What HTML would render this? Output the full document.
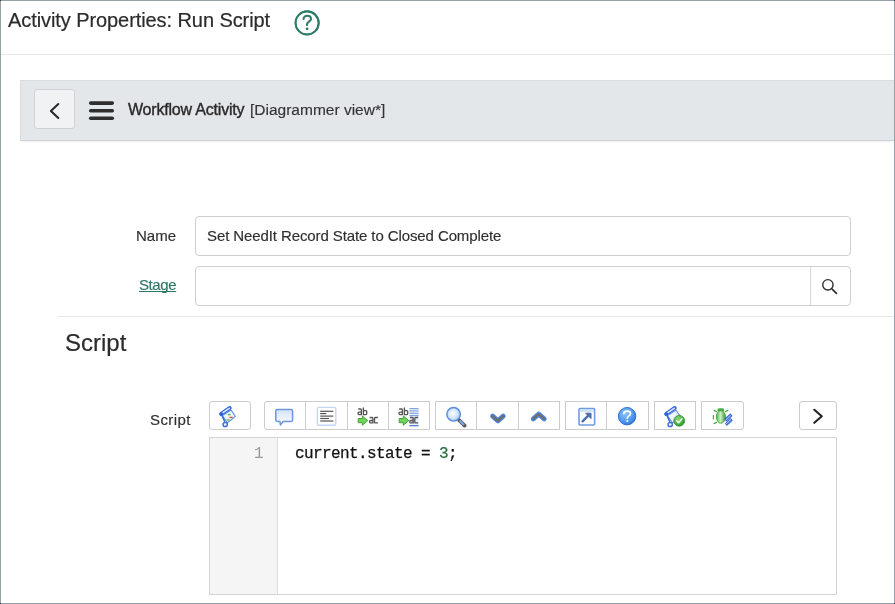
<!DOCTYPE html>
<html><head><meta charset="utf-8">
<style>
html,body{margin:0;padding:0;}
body{width:895px;height:604px;overflow:hidden;background:#fff;position:relative;font-family:"Liberation Sans",sans-serif;color:#2e2e2e;}
.a{position:absolute;white-space:pre;line-height:1;will-change:transform;}
#frame{position:absolute;left:0;top:0;width:895px;height:604px;box-sizing:border-box;border:1px solid #95a1a9;z-index:50;}
.cn{position:absolute;width:1px;height:1px;background:#33414c;z-index:51;}
#title{left:8px;top:10px;font-size:20px;letter-spacing:-0.08px;color:#2b2b2b;-webkit-text-stroke:0.2px #2b2b2b;}
#help{left:294px;top:10px;width:26px;height:26px;}
#hr1{left:1px;top:54px;width:894px;height:1px;background:#e6e8ea;}
#bar{left:20px;top:80px;width:874px;height:59px;background:#e4e7ea;border-top:1px solid #d9dde0;border-left:1px solid #d9dde0;border-bottom:1px solid #cfd3d6;box-shadow:0 2px 2px -1px rgba(0,0,0,0.07);}
#back{left:34px;top:89px;width:39px;height:38px;box-sizing:content-box;background:#f1f2f4;border:1px solid #ced2d6;border-radius:3px;}
#burger{left:88px;top:101px;width:26px;height:19px;}
#wf{left:128px;top:102px;font-size:16px;letter-spacing:-0.2px;-webkit-text-stroke:0.4px #2b2b2b;color:#2b2b2b;}
#dv{left:249.5px;top:102px;font-size:15.5px;color:#333;-webkit-text-stroke:0.15px #333;}
#lname{left:136px;top:228px;font-size:15px;color:#2e2e2e;-webkit-text-stroke:0.15px #2e2e2e;}
#lstage{left:139px;top:277px;font-size:15px;letter-spacing:-0.4px;color:#2b7764;-webkit-text-stroke:0.15px #2b7764;text-decoration:underline;text-decoration-skip-ink:none;}
#iname{left:195px;top:216px;width:654px;height:38px;border:1px solid #cfcfcf;border-radius:4px;}
#tname{left:207px;top:228px;font-size:15px;letter-spacing:-0.1px;color:#2e2e2e;-webkit-text-stroke:0.15px #2e2e2e;}
#istage{left:195px;top:266px;width:654px;height:38px;border:1px solid #cfcfcf;border-radius:4px;}
#sdiv{left:810px;top:267px;width:1px;height:38px;background:#d4d4d4;}
#hr2{left:58px;top:316px;width:837px;height:1px;background:#e6e8ea;}
#hscript{left:65px;top:331px;font-size:24px;color:#2b2b2b;-webkit-text-stroke:0.2px #2b2b2b;}
#lscript{left:150px;top:412px;font-size:15px;letter-spacing:0.4px;color:#2e2e2e;-webkit-text-stroke:0.15px #2e2e2e;}
.btn{position:absolute;top:401px;height:27px;box-sizing:content-box;border:1px solid #cccccc;background:#fff;}
#editor{left:209px;top:437px;width:626px;height:156px;border:1px solid #d4d4d4;}
#gutter{left:210px;top:438px;width:67px;height:156px;background:#f5f5f5;border-right:1px solid #dddddd;}
#ln{left:254px;top:446px;font-size:16px;font-family:"Liberation Mono",monospace;color:#999;}
#code3{color:#2a6f42;-webkit-text-stroke:0.25px #2a6f42;}
#code{left:295px;top:446px;font-size:16px;letter-spacing:-0.6px;-webkit-text-stroke:0.25px #111;font-family:"Liberation Mono",monospace;color:#111;}
</style></head><body>
<div id="frame"></div><div class="cn" style="left:0;top:0"></div><div class="cn" style="left:894px;top:0"></div><div class="cn" style="left:0;top:603px"></div><div class="cn" style="left:894px;top:603px"></div>
<div class="a" id="title">Activity Properties: Run Script</div>
<svg class="a" id="help" viewBox="0 0 26 26"><circle cx="13" cy="13" r="11.5" fill="none" stroke="#2c7866" stroke-width="1.9"/></svg>
<div class="a" id="hr1"></div>
<div class="a" id="bar"></div>
<div class="a" id="back"></div>
<div class="a" id="burger"></div>
<div class="a" id="wf">Workflow Activity</div>
<div class="a" id="dv">[Diagrammer view*]</div>
<div class="a" id="lname">Name</div>
<div class="a" id="lstage">Stage</div>
<div class="a" id="iname"></div>
<div class="a" id="tname">Set NeedIt Record State to Closed Complete</div>
<div class="a" id="istage"></div>
<div class="a" id="sdiv"></div>
<div class="a" id="hr2"></div>
<div class="a" id="hscript">Script</div>
<div class="a" id="lscript">Script</div>

<div class="btn" style="left:209px;width:40px;border-radius:3px;"></div>
<div class="btn" style="left:264px;width:164px;border-radius:3px 0 0 3px;"></div>
<div class="a" style="left:305px;top:402px;width:1px;height:27px;background:#ccc"></div>
<div class="a" style="left:347px;top:402px;width:1px;height:27px;background:#ccc"></div>
<div class="a" style="left:388px;top:402px;width:1px;height:27px;background:#ccc"></div>
<div class="btn" style="left:435px;width:123px;"></div>
<div class="a" style="left:476px;top:402px;width:1px;height:27px;background:#ccc"></div>
<div class="a" style="left:518px;top:402px;width:1px;height:27px;background:#ccc"></div>
<div class="btn" style="left:565px;width:82px;"></div>
<div class="a" style="left:606px;top:402px;width:1px;height:27px;background:#ccc"></div>
<div class="btn" style="left:654px;width:40px;"></div>
<div class="btn" style="left:701px;width:41px;border-radius:0 3px 3px 0;"></div>
<div class="btn" style="left:799px;width:36px;border-radius:3px;"></div>
<div class="a" id="editor"></div>
<div class="a" id="gutter"></div>
<div class="a" id="ln">1</div>
<div class="a" id="code">current.state = <span id="code3">3</span>;</div>

<svg class="a" style="left:0;top:0;z-index:20" width="895" height="604" viewBox="0 0 895 604">
<defs>
<radialGradient id="gMag" cx="0.45" cy="0.45" r="0.6"><stop offset="0" stop-color="#ffffff"/><stop offset="0.6" stop-color="#cfe3fb"/><stop offset="1" stop-color="#8fb8ee"/></radialGradient>
<linearGradient id="gBub" x1="0" y1="0" x2="0" y2="1"><stop offset="0" stop-color="#d6e4f7"/><stop offset="1" stop-color="#fafcff"/></linearGradient>
<radialGradient id="gHelp" cx="0.4" cy="0.35" r="0.7"><stop offset="0" stop-color="#8cc4fa"/><stop offset="0.7" stop-color="#4a97ea"/><stop offset="1" stop-color="#2d6fd6"/></radialGradient>
<radialGradient id="gGreen" cx="0.4" cy="0.35" r="0.7"><stop offset="0" stop-color="#8fd97c"/><stop offset="0.7" stop-color="#3fae3a"/><stop offset="1" stop-color="#2a8a2a"/></radialGradient>
<linearGradient id="gBug" x1="0" y1="0" x2="1" y2="0"><stop offset="0" stop-color="#4fb14a"/><stop offset="0.45" stop-color="#c9f1bf"/><stop offset="1" stop-color="#3d9e3a"/></linearGradient>
</defs>
<!-- help circle -->
<circle cx="307.3" cy="22.7" r="11.7" fill="none" stroke="#2f7c6b" stroke-width="1.5"/>
<path d="M303.6 19 C303.6 14.6 311 14.6 311 19 C311 21.6 307 21.8 307 24.2 L307 25.2" fill="none" stroke="#2f7c6b" stroke-width="2.1" stroke-linecap="round"/>
<circle cx="307.1" cy="28.8" r="1.4" fill="#2f7c6b"/>
<!-- back chevron -->
<path d="M58.3 104 L50.9 111 L58.3 118" fill="none" stroke="#2b2b2b" stroke-width="2.1" stroke-linecap="round" stroke-linejoin="round"/>
<!-- burger -->
<rect x="88.9" y="101.3" width="25.2" height="3.6" rx="1.8" fill="#2e2e2e"/>
<rect x="88.9" y="109.0" width="25.2" height="3.6" rx="1.8" fill="#2e2e2e"/>
<rect x="88.9" y="116.4" width="25.2" height="3.6" rx="1.8" fill="#2e2e2e"/>
<!-- stage search -->
<circle cx="827.9" cy="284.8" r="5.2" fill="none" stroke="#2e2e2e" stroke-width="1.4"/>
<path d="M831.9 288.9 L836.9 293.9" stroke="#2e2e2e" stroke-width="1.7" stroke-linecap="butt"/>

<!-- scroll icon btn1 -->
<g transform="translate(0 0)">
<path d="M222.3 415.6 L231 410 L235.3 416.3 L227.4 422.8 Z" fill="#eef4fd" stroke="#5c88e4" stroke-width="1.1" stroke-linejoin="round"/>
<path d="M221.2 413.9 L229.8 407.9" stroke="#3a6ce0" stroke-width="3.8" stroke-linecap="round"/>
<path d="M222.2 413.2 L229.2 408.4" stroke="#dbe7fc" stroke-width="1.5" stroke-linecap="round"/>
<circle cx="221.3" cy="414.1" r="1.9" fill="#2f62d6"/>
<path d="M222 415.8 L224.6 421.4" stroke="#3a6ce0" stroke-width="1.5" stroke-linecap="round"/>
<circle cx="225.2" cy="424.5" r="2.1" fill="#fff" stroke="#3f6fe0" stroke-width="1.5"/>
</g>
<path d="M227.8 414.6 L230.6 414.6" stroke="#5cc24f" stroke-width="1.5"/>
<path d="M229.4 417.4 L232.6 417.4" stroke="#e0452d" stroke-width="1.3"/>
<path d="M226.6 419.9 L229.6 419.9" stroke="#5cc24f" stroke-width="1.5"/>
<!-- comment bubble -->
<path d="M277.2 409.6 H291.2 Q292.6 409.6 292.6 411 V420 Q292.6 421.4 291.2 421.4 H283.2 L280.4 425 L279.9 421.4 H277.2 Q275.8 421.4 275.8 420 V411 Q275.8 409.6 277.2 409.6 Z" fill="url(#gBub)" stroke="#6b98d8" stroke-width="1.5" stroke-linejoin="round"/>
<!-- format -->
<rect x="317.4" y="407.4" width="18.4" height="17.8" rx="1.5" fill="#fff" stroke="#c4d6f6" stroke-width="1.4"/>
<g stroke="#555" stroke-width="1.2">
<path d="M320.2 411.3 H333.3"/><path d="M320.2 413.6 H326.3"/><path d="M320.2 416.1 H333.3"/><path d="M320.2 418.5 H329"/><path d="M320.2 421 H333.3"/>
</g>
<!-- replace -->
<path d="M358.2 409.0 H360.6 Q361.40000000000003 409.0 361.40000000000003 410.0 V414.59999999999997 H359.0 Q358.0 414.59999999999997 358.0 413.29999999999995 Q358.0 412.09999999999997 359.0 412.09999999999997 H361.40000000000003" fill="none" stroke="#555" stroke-width="1.35"/>
<path d="M363.40000000000003 407.4 V414.59999999999997 H365.8 Q366.7 414.59999999999997 366.7 413.59999999999997 V411.59999999999997 Q366.7 410.59999999999997 365.8 410.59999999999997 H363.40000000000003" fill="none" stroke="#555" stroke-width="1.35"/><path d="M369.7 417.5 H372.1 Q372.90000000000003 417.5 372.90000000000003 418.5 V422.9 H370.5 Q369.5 422.9 369.5 421.7 Q369.5 420.5 370.5 420.5 H372.90000000000003" fill="none" stroke="#555" stroke-width="1.35"/>
<path d="M377.90000000000003 417.5 H375.3 Q374.5 417.5 374.5 418.5 V421.9 Q374.5 422.9 375.3 422.9 H377.90000000000003" fill="none" stroke="#555" stroke-width="1.35"/><path d="M399.2 409.0 H401.6 Q402.40000000000003 409.0 402.40000000000003 410.0 V414.59999999999997 H400.0 Q399.0 414.59999999999997 399.0 413.29999999999995 Q399.0 412.09999999999997 400.0 412.09999999999997 H402.40000000000003" fill="none" stroke="#555" stroke-width="1.35"/>
<path d="M404.40000000000003 407.4 V414.59999999999997 H406.8 Q407.7 414.59999999999997 407.7 413.59999999999997 V411.59999999999997 Q407.7 410.59999999999997 406.8 410.59999999999997 H404.40000000000003" fill="none" stroke="#555" stroke-width="1.35"/>
<path d="M358.2 418.5 H362.3 V416 L367.8 420.6 L362.3 425.3 V422.7 H358.2 Z" fill="#6fd45a" stroke="#3a9a2e" stroke-width="0.9" stroke-linejoin="round"/>
<!-- replace all -->
<rect x="409.4" y="408" width="9.2" height="16.6" fill="#e8eefa"/>
<g stroke="#7ea1dc" stroke-width="1.1"><path d="M409.4 408.6 H418.6"/><path d="M409.4 410.9 H418.6"/><path d="M409.4 413.3 H418.6"/><path d="M409.4 415.6 H418.6"/></g>
<path d="M409.4 425.7 H418.6" stroke="#3e74e0" stroke-width="1.2"/>
<path d="M410.0 417.5 H412.40000000000003 Q413.20000000000005 417.5 413.20000000000005 418.5 V422.9 H410.8 Q409.8 422.9 409.8 421.7 Q409.8 420.5 410.8 420.5 H413.20000000000005" fill="none" stroke="#555" stroke-width="1.35"/>
<path d="M418.20000000000005 417.5 H415.6 Q414.8 417.5 414.8 418.5 V421.9 Q414.8 422.9 415.6 422.9 H418.20000000000005" fill="none" stroke="#555" stroke-width="1.35"/>
<path d="M399.2 418.5 H403.3 V416 L408.8 420.6 L403.3 425.3 V422.7 H399.2 Z" fill="#6fd45a" stroke="#3a9a2e" stroke-width="0.9" stroke-linejoin="round"/>
<!-- magnifier -->
<path d="M459 420 L464.6 425.6" stroke="#5a5a5a" stroke-width="3.8" stroke-linecap="round"/>
<path d="M459.6 420.6 L464 425" stroke="#7aa3e0" stroke-width="2.2"/>
<circle cx="453.6" cy="414.3" r="6.8" fill="url(#gMag)" stroke="#5b8bd6" stroke-width="1.4"/>
<!-- down chevron -->
<path d="M492.6 416.2 L497.9 420.8 L503.2 416.2" fill="none" stroke="#4f84dc" stroke-width="5" stroke-linecap="round" stroke-linejoin="round"/>
<path d="M492.6 416.2 L497.9 420.8 L503.2 416.2" fill="none" stroke="#6e6e6e" stroke-width="2.3" stroke-linecap="round" stroke-linejoin="round"/>
<!-- up chevron -->
<path d="M533.3 418.8 L538.7 414.2 L544.2 418.8" fill="none" stroke="#4f84dc" stroke-width="5" stroke-linecap="round" stroke-linejoin="round"/>
<path d="M533.3 418.8 L538.7 414.2 L544.2 418.8" fill="none" stroke="#6e6e6e" stroke-width="2.3" stroke-linecap="round" stroke-linejoin="round"/>
<!-- fullscreen -->
<rect x="579" y="408.6" width="15.6" height="16.4" rx="1" fill="#fff" stroke="#6f9be0" stroke-width="1.6"/>
<rect x="579.8" y="409.4" width="14" height="2.6" fill="#cfe4fa"/>
<path d="M582.6 421.3 L589 414.9" stroke="#4a6faa" stroke-width="2.4" stroke-linecap="round"/>
<path d="M585.6 413.2 L591 413.2 L591 418.6 Z" fill="#4a6faa" stroke="#4a6faa" stroke-width="1" stroke-linejoin="round"/>
<!-- help blue -->
<circle cx="627.1" cy="416.2" r="8.7" fill="url(#gHelp)" stroke="#2f6dd8" stroke-width="1"/>
<path d="M623.8 413.6 C623.8 410.2 630.6 410.2 630.6 413.6 C630.6 415.8 627.3 416 627.3 418.2" fill="none" stroke="#fff" stroke-width="1.7" stroke-linecap="round"/>
<circle cx="627.3" cy="421" r="1" fill="#fff"/>
<!-- syntax check scroll -->
<g transform="translate(445 0)">
<path d="M222.3 415.6 L231 410 L235.3 416.3 L227.4 422.8 Z" fill="#eef4fd" stroke="#5c88e4" stroke-width="1.1" stroke-linejoin="round"/>
<path d="M221.2 413.9 L229.8 407.9" stroke="#3a6ce0" stroke-width="3.8" stroke-linecap="round"/>
<path d="M222.2 413.2 L229.2 408.4" stroke="#dbe7fc" stroke-width="1.5" stroke-linecap="round"/>
<circle cx="221.3" cy="414.1" r="1.9" fill="#2f62d6"/>
<path d="M222 415.8 L224.6 421.4" stroke="#3a6ce0" stroke-width="1.5" stroke-linecap="round"/>
<circle cx="225.2" cy="424.5" r="2.1" fill="#fff" stroke="#3f6fe0" stroke-width="1.5"/>
</g>
<circle cx="679.2" cy="420.8" r="5.4" fill="url(#gGreen)" stroke="#2f8f2f" stroke-width="0.8"/>
<path d="M676.6 420.8 L678.6 422.8 L682 418.8" fill="none" stroke="#f4fff0" stroke-width="1.5" stroke-linecap="round" stroke-linejoin="round"/>
<!-- debug bug -->
<g stroke="#4aa544" stroke-width="1.2" stroke-linecap="round" fill="none">
<path d="M714 410.4 L716.6 411.8"/><path d="M727.8 410.4 L725.2 411.8"/>
<path d="M713.4 415.5 L713.4 419"/><path d="M714 423.6 L716.6 422.4"/>
</g>
<rect x="717.4" y="408.2" width="6.8" height="3.6" rx="1.6" fill="#4dac47"/>
<ellipse cx="720.9" cy="417" rx="4.6" ry="6.2" fill="url(#gBug)" stroke="#3f9c3a" stroke-width="0.8"/>
<path d="M725.4 423.5 L730.8 418.6 L732.2 420.6 L726.8 425.4 Z" fill="#4a7ae6" stroke="#3a66d8" stroke-width="1"/>
<path d="M725 419 L730.4 414 L731.8 416 L726.4 421 Z" fill="#9bb9f2" stroke="#3a66d8" stroke-width="1.1"/>
<path d="M726 424 L731 419.3" stroke="#c5d7fa" stroke-width="0.8"/>
<!-- right arrow btn -->
<path d="M814.3 409.8 L821.8 416.3 L814.3 422.8" fill="none" stroke="#222" stroke-width="2.1" stroke-linecap="round" stroke-linejoin="round"/>
</svg>
</body></html>
